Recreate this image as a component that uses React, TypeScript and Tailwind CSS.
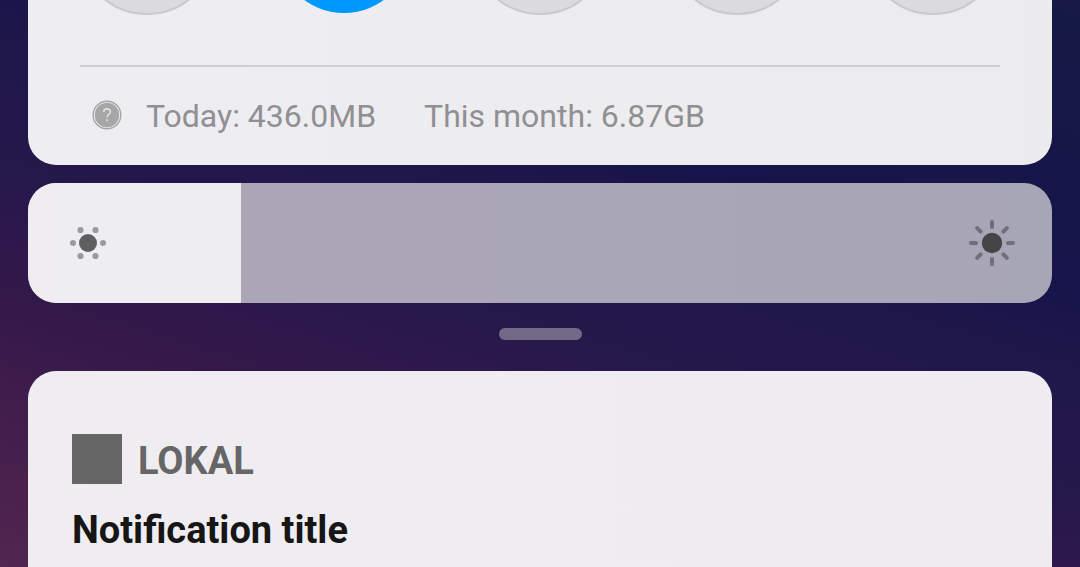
import React, { useState } from 'react';
import clsx from 'clsx';

const MAX_BRIGHTNESS = 1024;

const toggles = [
  { name: 'Wi-Fi', active: false },
  { name: 'Mobile data', active: true },
  { name: 'Bluetooth', active: false },
  { name: 'Flashlight', active: false },
  { name: 'Airplane mode', active: false },
];

const HelpIcon: React.FC = () => (
  <svg className="size-[30px]" viewBox="0 0 30 30" fill="none" aria-hidden="true">
    <circle cx="15" cy="15" r="13.8" stroke="#a5a5a7" strokeWidth="1.4" />
    <circle cx="15" cy="15" r="12.2" fill="#a6a6a7" />
    <path
      d="M11.7 12.2c0-2.1 1.4-3.3 3.4-3.3s3.3 1.2 3.3 3c0 2.5-3.3 2.7-3.3 5.6M15.1 19.3v2"
      stroke="#e0e0e1"
      strokeWidth="1.6"
    />
  </svg>
);

const DimIcon: React.FC = () => (
  <svg className="size-9" viewBox="0 0 36 36" aria-hidden="true">
    <circle cx="18" cy="18" r="9" fill="#5f5f60" />
    <g fill="#9b9b9e">
      <circle cx="3" cy="18" r="3" />
      <circle cx="33" cy="18" r="3" />
      <circle cx="10.5" cy="5" r="3.1" />
      <circle cx="25.5" cy="5" r="3.1" />
      <circle cx="10.5" cy="31" r="3.1" />
      <circle cx="25.5" cy="31" r="3.1" />
    </g>
  </svg>
);

const BrightIcon: React.FC = () => (
  <svg className="size-[46px]" viewBox="0 0 46 46" aria-hidden="true">
    <circle cx="23" cy="23" r="10.2" fill="#454449" />
    <path
      d="M23 2v5M23 39v5M2 23h5M39 23h5M8.2 8.2l3.4 3.4M34.4 34.4l3.4 3.4M8.2 37.8l3.4-3.4M34.4 11.6l3.4-3.4"
      stroke="#706e79"
      strokeWidth="4"
      strokeLinecap="round"
    />
  </svg>
);

const QuickSettings: React.FC = () => (
  <section className="rounded-b-[28px] bg-linear-to-r from-[#eeedf2] to-[#ececee] px-[50px]">
    <div className="flex h-[15px] items-end justify-between">
      {toggles.map(toggle => (
        <button
          key={toggle.name}
          type="button"
          aria-label={toggle.name}
          aria-pressed={toggle.active}
          className={clsx(
            'size-[138px] shrink-0 rounded-full border-2',
            toggle.active
              ? 'border-transparent bg-[#0099ff] bg-clip-padding'
              : 'border-[#cacacc] bg-[#dbdbdd]'
          )}
        />
      ))}
    </div>
    <div className="mx-0.5 mt-[50px] border-t-2 border-[#cfcfd2]" />
    <div className="flex h-[98px] items-center px-3.5 font-[Roboto,sans-serif] text-[32px] leading-10 text-[#909092]">
      <button type="button" aria-label="Data usage help" className="mr-6 pb-0.5">
        <HelpIcon />
      </button>
      <span className="mr-12">Today: 436.0MB</span>
      <span>This month: 6.87GB</span>
    </div>
  </section>
);

const BrightnessSlider: React.FC = () => {
  const [brightness, setBrightness] = useState(213);

  return (
    <label className="relative flex h-[120px] items-center justify-between overflow-hidden rounded-[28px] bg-linear-to-r from-[#aca6b6] to-[#a7a6b6] pr-[37px] pl-[42px]">
      <div
        className="absolute inset-y-0 left-0 bg-linear-to-r from-[#efedf2] to-[#eeeef0]"
        style={{ width: `${(brightness / MAX_BRIGHTNESS) * 100}%` }}
      />
      <span className="relative">
        <DimIcon />
      </span>
      <span className="relative">
        <BrightIcon />
      </span>
      <input
        type="range"
        aria-label="Brightness"
        min={0}
        max={MAX_BRIGHTNESS}
        value={brightness}
        onChange={e => setBrightness(Number(e.target.value))}
        className="absolute inset-0 size-full cursor-pointer opacity-0"
      />
    </label>
  );
};

const Notification: React.FC = () => (
  <article className="flex-1 rounded-t-[28px] bg-linear-to-r from-[#f0edf1] to-[#eeecf1] px-11 pt-[63px] font-[Roboto,sans-serif] text-[38px] font-bold">
    <header className="flex items-center gap-4">
      <div className="size-[50px] bg-[#666666]" />
      <span className="pt-1 leading-[46px] text-[#666666]">LOKAL</span>
    </header>
    <h2 className="mt-[22px] leading-[48px] text-[#161616]">Notification title</h2>
  </article>
);

export default function App() {
  return (
    <div className="h-screen overflow-hidden bg-[linear-gradient(197deg,#161a45_0%,#16144a_32%,#1f174a_41%,#25184b_55%,#2e184b_63%,#35184a_71%,#441f4c_85%,#52264f_100%)]">
      <main className="flex min-h-screen flex-col px-7">
        <QuickSettings />
        <div className="mt-[18px]">
          <BrightnessSlider />
        </div>
        <button
          type="button"
          aria-label="Expand panel"
          className="mt-[25px] mb-[31px] h-3 w-[83px] self-center rounded-full bg-[#746889]"
        />
        <Notification />
      </main>
    </div>
  );
}
